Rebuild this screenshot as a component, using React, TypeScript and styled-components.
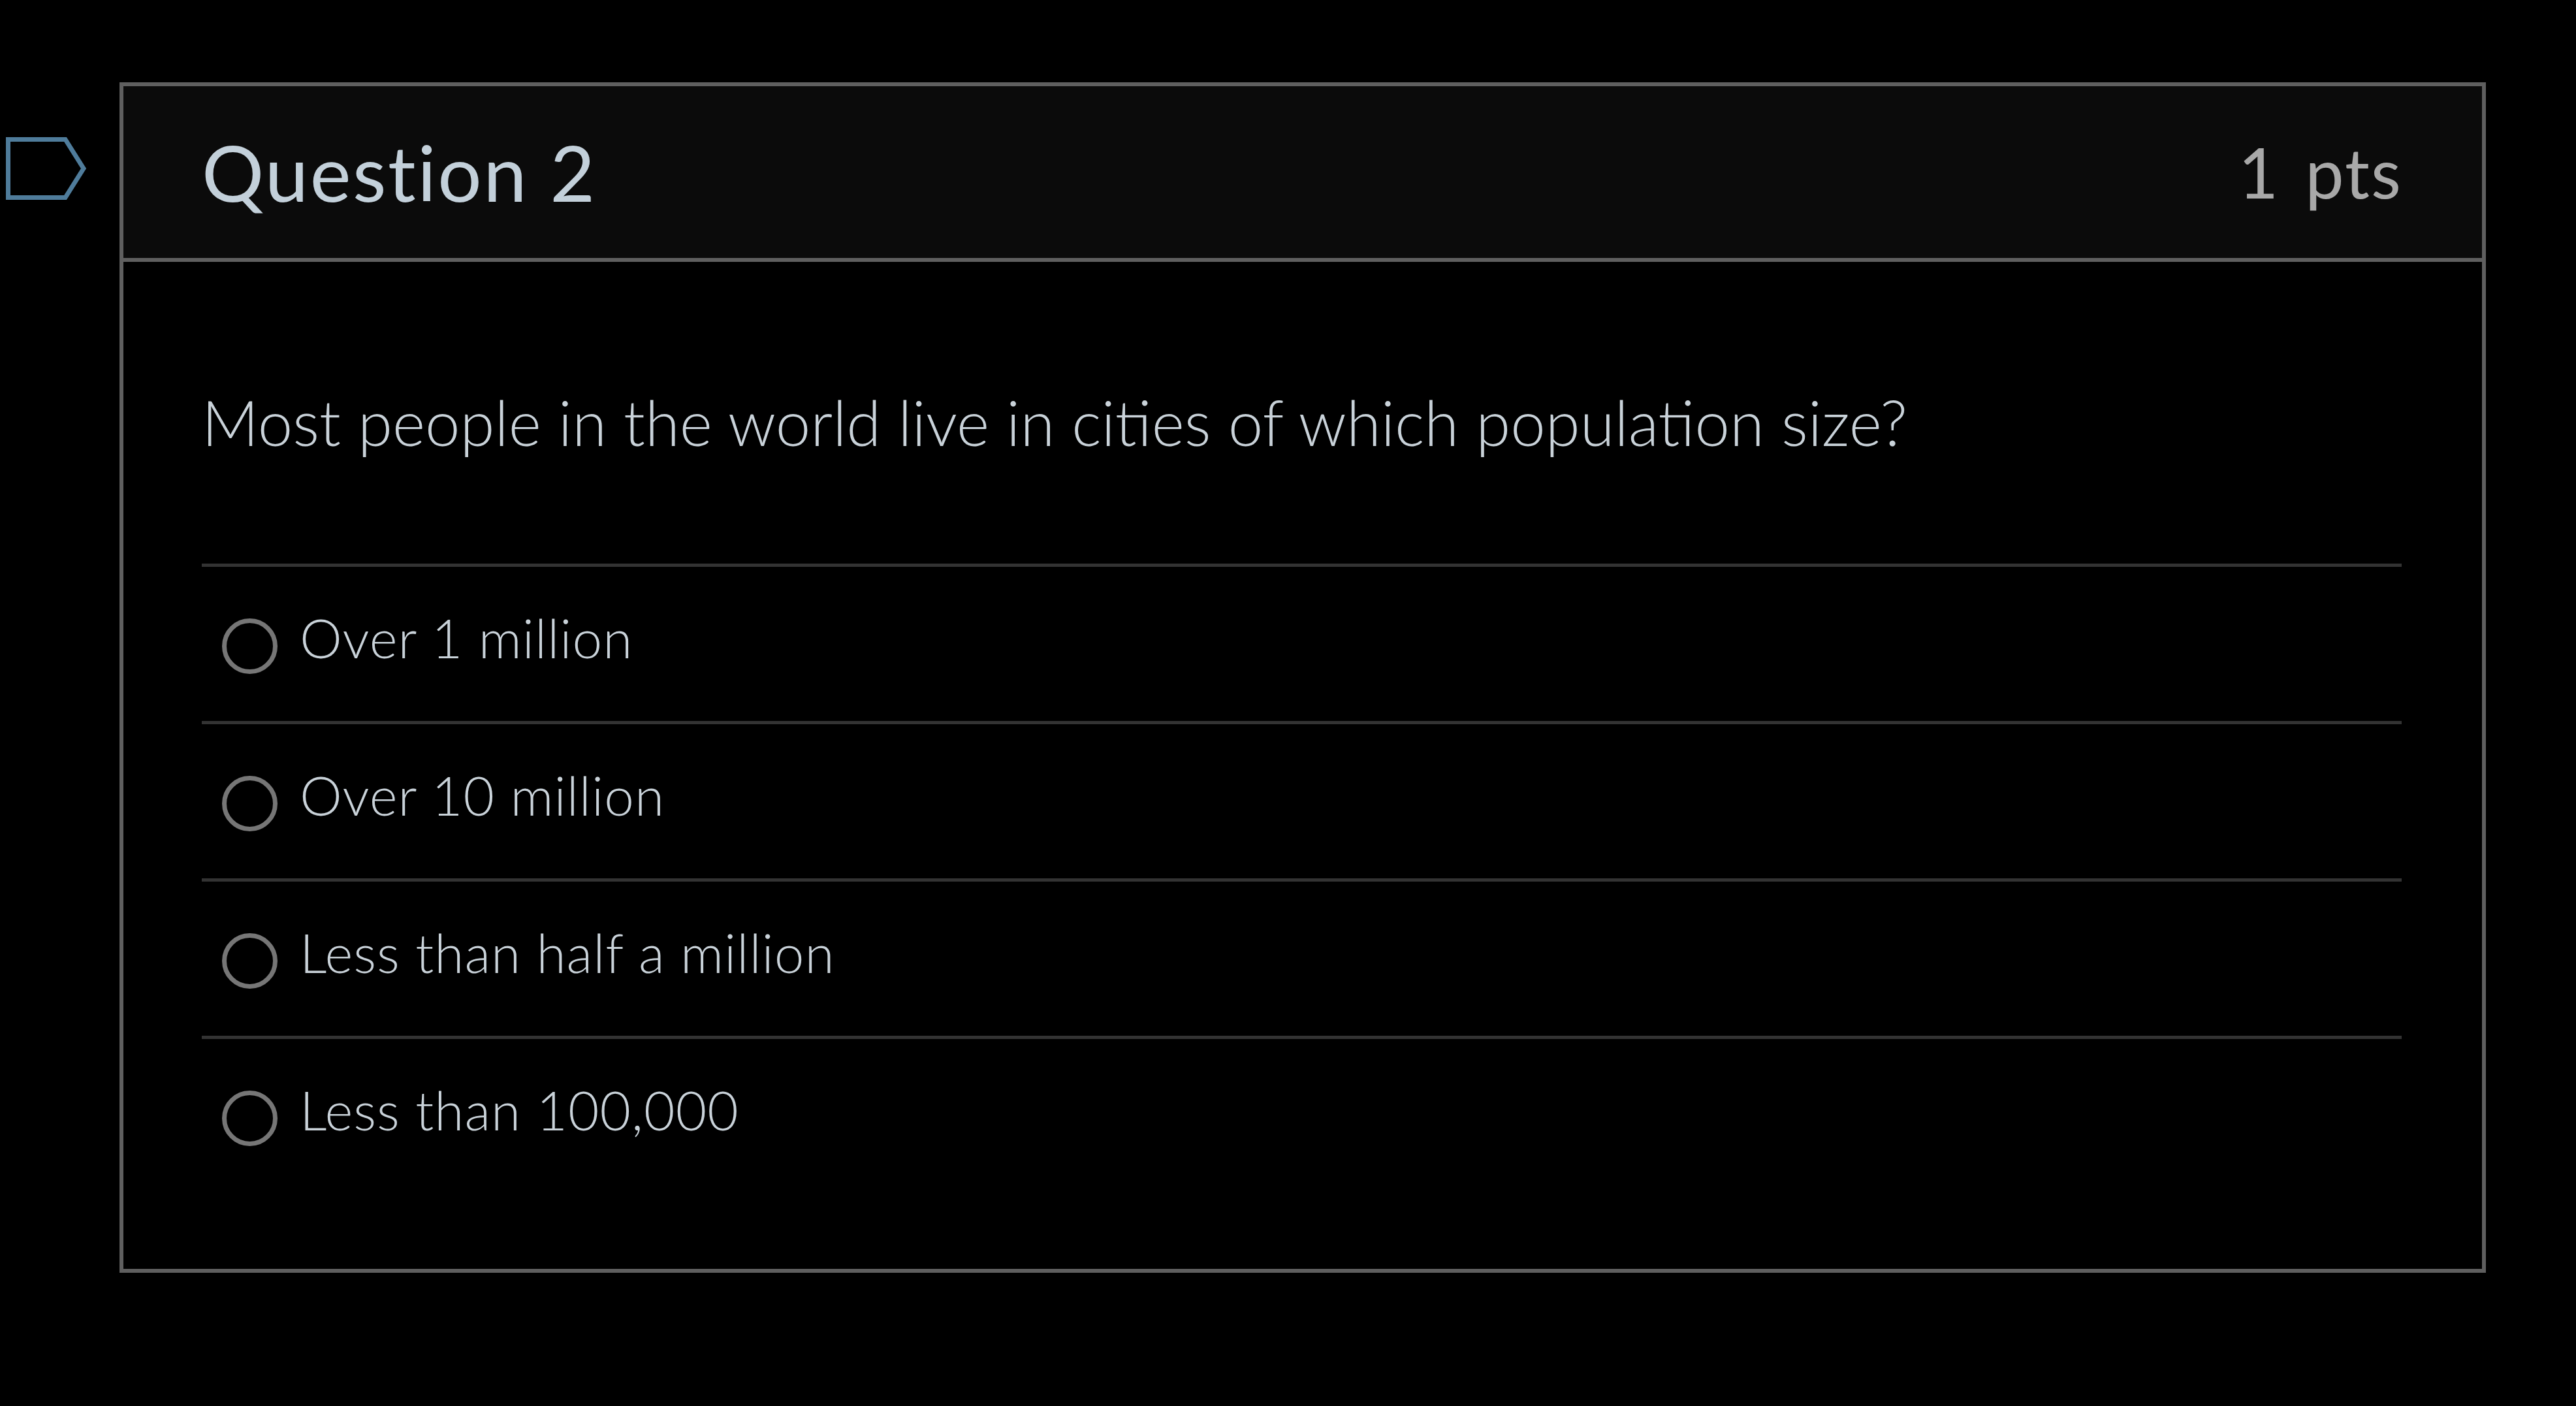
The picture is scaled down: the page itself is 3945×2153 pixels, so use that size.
import styled, { createGlobalStyle } from "styled-components";

const GlobalStyle = createGlobalStyle`
	html, body {
		margin: 0;
		padding: 0;
		background: #000;
	}
	body {
		font-family: Lato, "Noto Sans", sans-serif;
	}
`;

const Page = styled.div`
	display: grid;
	grid-template-columns: 183px 3624px;
	align-items: start;
	padding-top: 126px;
	min-height: 2153px;
	box-sizing: border-box;
	background: #000;
`;

const FlagButton = styled.div`
	margin: 84px 0 0 9px;
	width: 124px;
	height: 96px;
	svg {
		display: block;
	}
`;

const QuestionBox = styled.section`
	border: 6px solid #5f5f5f;
	background: #000;
`;

const Header = styled.header`
	height: 263px;
	padding: 0 122px 0 120px;
	display: flex;
	justify-content: space-between;
	align-items: center;
	background: #0b0b0b;
	border-bottom: 6px solid #5f5f5f;
`;

const Title = styled.h2`
	margin: 0;
	font-size: 119px;
	font-weight: 400;
	letter-spacing: 2.5px;
	line-height: 1.2;
	color: #c3d0da;
`;

const Points = styled.span`
	font-size: 106px;
	font-weight: 400;
	letter-spacing: 2px;
	word-spacing: 10px;
	line-height: 1.2;
	color: #a8a8a8;
`;

const Body = styled.div`
	padding: 187px 123px 116px 120px;
`;

const Prompt = styled.p`
	margin: 0 0 160px;
	font-size: 96px;
	font-weight: 300;
	line-height: 1.2;
	color: #c9d2d9;
`;

const Answers = styled.div`
	display: flex;
	flex-direction: column;
`;

const Answer = styled.label`
	height: 241px;
	box-sizing: border-box;
	border-top: 5px solid #333;
	padding-top: 59px;
	display: flex;
	align-items: flex-start;
`;

const Radio = styled.span`
	margin: 20px 34px 0 31px;
	width: 85px;
	height: 85px;
	box-sizing: border-box;
	border-radius: 50%;
	border: 7px solid #767676;
	flex-shrink: 0;
`;

const AnswerText = styled.span`
	font-size: 82px;
	font-weight: 300;
	letter-spacing: 1px;
	line-height: 1.2;
	color: #c9d2d9;
`;

const answers = [
	"Over 1 million",
	"Over 10 million",
	"Less than half a million",
	"Less than 100,000",
];

const App = () => {
	return (
		<>
			<GlobalStyle />
			<Page>
				<FlagButton>
					<svg width="124" height="96" viewBox="0 0 124 96">
						<polygon
							points="3.5,3.5 91,3.5 119,48 91,92.5 3.5,92.5"
							fill="none"
							stroke="#4f7c9b"
							strokeWidth="7"
						/>
					</svg>
				</FlagButton>
				<QuestionBox>
					<Header>
						<Title>Question 2</Title>
						<Points>1 pts</Points>
					</Header>
					<Body>
						<Prompt>
							Most people in the world live in cities of which population size?
						</Prompt>
						<Answers>
							{answers.map((a) => (
								<Answer key={a}>
									<Radio />
									<AnswerText>{a}</AnswerText>
								</Answer>
							))}
						</Answers>
					</Body>
				</QuestionBox>
			</Page>
		</>
	);
};

export default App;
